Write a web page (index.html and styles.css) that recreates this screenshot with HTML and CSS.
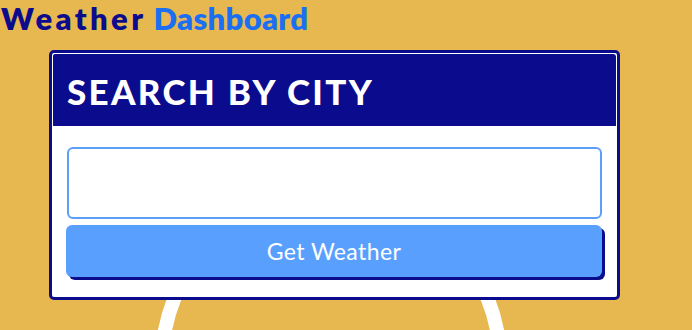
FILE: index.html
```html
<!DOCTYPE html>
<html lang="en">
<head>
<meta charset="utf-8">
<title>Weather Dashboard</title>
<link rel="stylesheet" href="styles.css">
</head>
<body>
<svg class="sun-ring" width="692" height="330" viewBox="0 0 692 330" aria-hidden="true">
  <circle cx="331" cy="362" r="169" fill="none" stroke="#ffffff" stroke-width="14"/>
</svg>
<h1 class="app-title"><span class="title-main">Weather</span> <span class="title-sub">Dashboard</span></h1>
<section class="search-card">
  <h2 class="search-card__header">SEARCH BY CITY</h2>
  <div class="search-card__body">
    <input class="city-input" type="text" aria-label="City">
    <button class="get-btn" type="button">Get Weather</button>
  </div>
</section>
</body>
</html>
```

FILE: styles.css
```css
html, body {
  margin: 0;
  padding: 0;
}
body {
  width: 692px;
  height: 330px;
  overflow: hidden;
  background: #e8b850;
  font-family: Lato, "Open Sans", sans-serif;
  position: relative;
}
.sun-ring {
  position: absolute;
  left: 0;
  top: 0;
  z-index: 0;
}
.app-title {
  position: relative;
  z-index: 1;
  margin: 0;
  padding: 0 0 0 1px;
  line-height: 37px;
  font-size: 31px;
  font-weight: 800;
  white-space: nowrap;
}
.title-main {
  color: #0b0b8c;
  letter-spacing: 3.4px;
}
.title-sub {
  color: #1b6ff2;
  letter-spacing: 0.3px;
}
.search-card {
  position: relative;
  z-index: 1;
  margin: 13px 0 0 49px;
  width: 563px;
  border: 3px solid #0b0b8e;
  border-radius: 5px;
  padding: 1px;
  background: #ffffff;
}
.search-card__header {
  margin: 0;
  height: 72px;
  box-sizing: border-box;
  padding: 2px 0 0 14px;
  display: flex;
  align-items: center;
  background: #0b0b8e;
  color: #ffffff;
  font-size: 35px;
  font-weight: 900;
  letter-spacing: 2.3px;
  border-radius: 2px 3px 0 0;
}
.search-card__body {
  padding: 21px 14px 19px 13px;
  display: flex;
  flex-direction: column;
  gap: 6px;
}
.city-input {
  margin: 0 0 0 1px;
  width: 535px;
  height: 72px;
  box-sizing: border-box;
  border: 2px solid #5b9ff7;
  border-radius: 6px;
  background: #ffffff;
  font-size: 20px;
  outline: none;
}
.get-btn {
  width: 536px;
  height: 52px;
  border: none;
  border-radius: 6px;
  background: #599ffd;
  color: #ffffff;
  font-family: Lato, "Open Sans", sans-serif;
  font-size: 23px;
  letter-spacing: 0.4px;
  box-shadow: 3px 3px 0 #0b0b8e;
  padding: 0;
}
```
